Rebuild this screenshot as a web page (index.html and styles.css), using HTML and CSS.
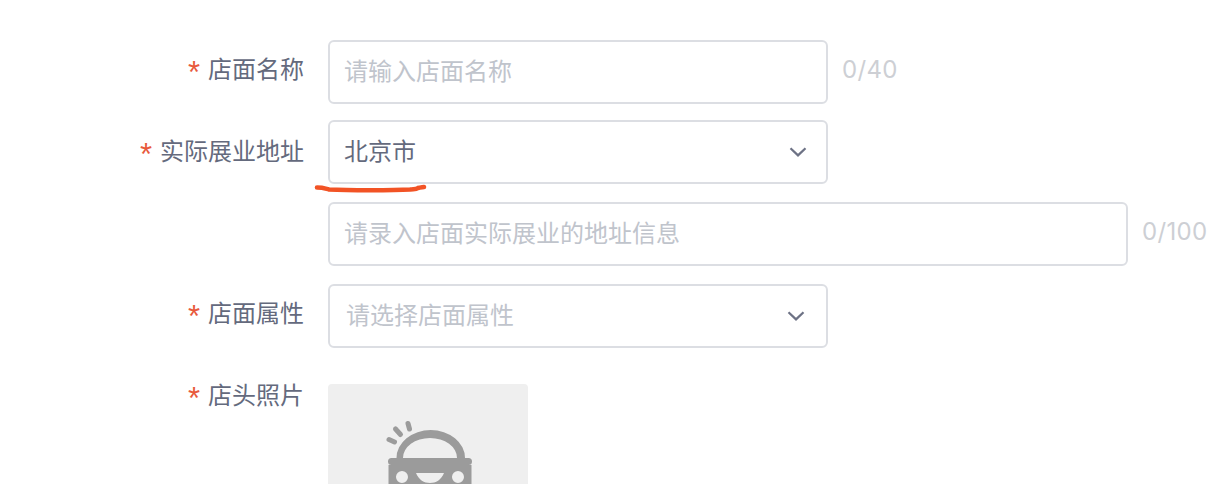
FILE: index.html
```html
<!DOCTYPE html>
<html lang="zh-CN">
<head>
<meta charset="utf-8">
<title>店面信息</title>
<link rel="stylesheet" href="styles.css">
</head>
<body>
<form class="form">
  <div class="row">
    <label class="label"><span class="star">*</span>店面名称</label>
    <div class="field w500"><span class="placeholder">请输入店面名称</span></div>
    <span class="count">0/40</span>
  </div>
  <div class="row">
    <label class="label low"><span class="star">*</span>实际展业地址</label>
    <div class="field w500 select">
      <span class="value">北京市</span>
      <svg class="chevron" width="18" height="10" viewBox="0 0 18 10"><path d="M1.500 1.200 9 8.400l7.500-7.200" fill="none" stroke="#6d7285" stroke-width="2.200"/></svg>
    </div>
    <svg class="squiggle" width="116" height="14" viewBox="0 0 116 14"><path d="M4 6.500 C10 6.500 12 7.500 16 8.500 C35 9.500 80 9.500 97 8.500 C101 8 103 8.500 105 7 C107 6.300 109 6.300 111 6" fill="none" stroke="#f25325" stroke-width="4.600" stroke-linecap="round"/></svg>
  </div>
  <div class="row address">
    <div class="label"></div>
    <div class="field w800"><span class="placeholder">请录入店面实际展业的地址信息</span></div>
    <span class="count">0/100</span>
  </div>
  <div class="row">
    <label class="label"><span class="star">*</span>店面属性</label>
    <div class="field w500 select attr">
      <span class="placeholder">请选择店面属性</span>
      <svg class="chevron" width="18" height="10" viewBox="0 0 18 10"><path d="M1.500 1.200 9 8.400l7.500-7.200" fill="none" stroke="#6d7285" stroke-width="2.200"/></svg>
    </div>
  </div>
  <div class="row photo-row">
    <label class="label"><span class="star">*</span>店头照片</label>
    <div class="photo">
      <svg class="car" width="88" height="100" viewBox="0 0 88 100">
        <g fill="none" stroke="#9b9b9b" stroke-width="5" stroke-linecap="round">
          <path d="M5 19.500 10.500 22"/>
          <path d="M11.500 9 16.500 14.500"/>
          <path d="M24 3.500 25.500 9"/>
        </g>
        <path fill="#9b9b9b" d="M12.500 38A34.250 28 0 0 1 81 38H73A27 20 0 0 0 19 38Z"/>
        <path fill-rule="evenodd" fill="#9b9b9b" d="M7.500 38H84.500a3.500 3.500 0 0 1 0 7H87.500V80H4.500V45H7.500a3.500 3.500 0 0 1 0-7ZM18 51a6 6 0 1 1 0 12 6 6 0 0 1 0-12ZM74 51a6 6 0 1 1 0 12 6 6 0 0 1 0-12ZM32 53H60C57 60 52 63 46 63 40 63 35 60 32 53Z"/>
      </svg>
    </div>
  </div>
</form>
</body>
</html>
```
FILE: styles.css
```css
html, body {
  margin: 0;
  height: 484px;
  overflow: hidden;
  background: #fff;
}

body {
  font-family: "Inter", "Noto Sans CJK SC", sans-serif;
  font-size: 24px;
  color: #646a7d;
}

.form {
  display: flex;
  flex-direction: column;
  gap: 16px;
  padding-top: 40px;
}

.row {
  position: relative;
  display: flex;
  align-items: flex-start;
  gap: 24px;
}

.address {
  margin-top: 2px;
  margin-bottom: 2px;
}

.photo-row {
  margin-top: 20px;
}

.label {
  flex: none;
  width: 304px;
  height: 60px;
  line-height: 60px;
  text-align: right;
  white-space: nowrap;
}

.label.low {
  line-height: 64px;
}

.photo-row .label {
  line-height: 24px;
}

.star {
  margin-right: 8px;
  line-height: 0;
  vertical-align: -5px;
  font-size: 31px;
  color: #e85a3c;
  font-family: "Liberation Sans", sans-serif;
}

.field {
  flex: none;
  box-sizing: border-box;
  display: flex;
  align-items: center;
  height: 64px;
  padding: 0 14px 0 15px;
  border: 2px solid #dcdee3;
  border-radius: 6px;
  background: #fff;
}

.w500 { width: 500px; }
.w800 { width: 800px; }

.select {
  justify-content: space-between;
  padding-right: 19px;
}

.attr {
  padding-left: 17px;
  padding-right: 21px;
}

.placeholder,
.value {
  margin-left: -1px;
  margin-bottom: 6px;
}

.placeholder {
  color: #c0c4cc;
}

.value {
  color: #646a7d;
}

.chevron {
  flex: none;
}

.count {
  margin-left: -10px;
  line-height: 60px;
  letter-spacing: 0.3px;
  color: #cdcfd4;
}

.squiggle {
  position: absolute;
  left: 313px;
  top: 61px;
}

.photo {
  flex: none;
  display: flex;
  justify-content: center;
  box-sizing: border-box;
  width: 200px;
  height: 200px;
  padding-top: 36px;
  border-radius: 4px;
  background: #efefef;
}

.car {
  overflow: visible;
}
```
